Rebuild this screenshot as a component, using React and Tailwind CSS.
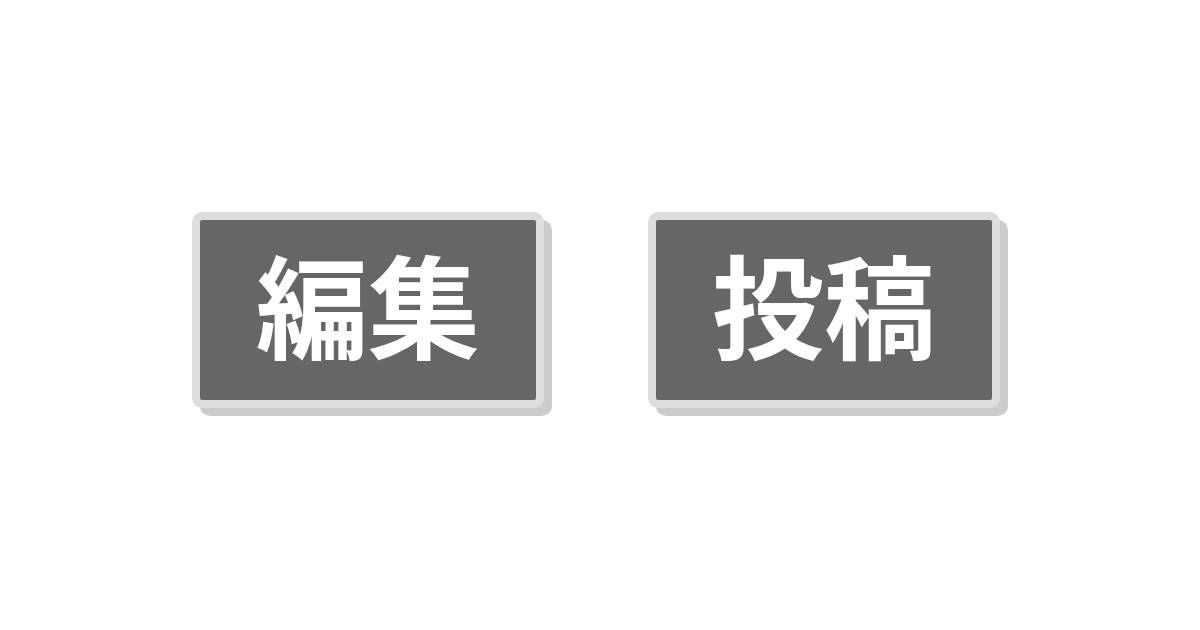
export default function App() {
  const labels = ["編集", "投稿"];
  return (
    <div className="w-[1200px] h-[630px] bg-white flex items-center justify-center gap-[96px]">
      {labels.map((label) => (
        <div
          key={label}
          className="mr-[8px] mb-[10px] w-[352px] h-[196px] rounded-[10px] border-[8px] border-[#dddddd] bg-[#666666] shadow-[8px_8px_0_#cccccc] flex items-center justify-center"
        >
          <span
            className="text-white font-bold text-[112px] leading-none pb-[16px]"
            style={{ fontFamily: '"Noto Sans CJK JP", "Noto Sans", sans-serif' }}
          >
            {label}
          </span>
        </div>
      ))}
    </div>
  );
}
